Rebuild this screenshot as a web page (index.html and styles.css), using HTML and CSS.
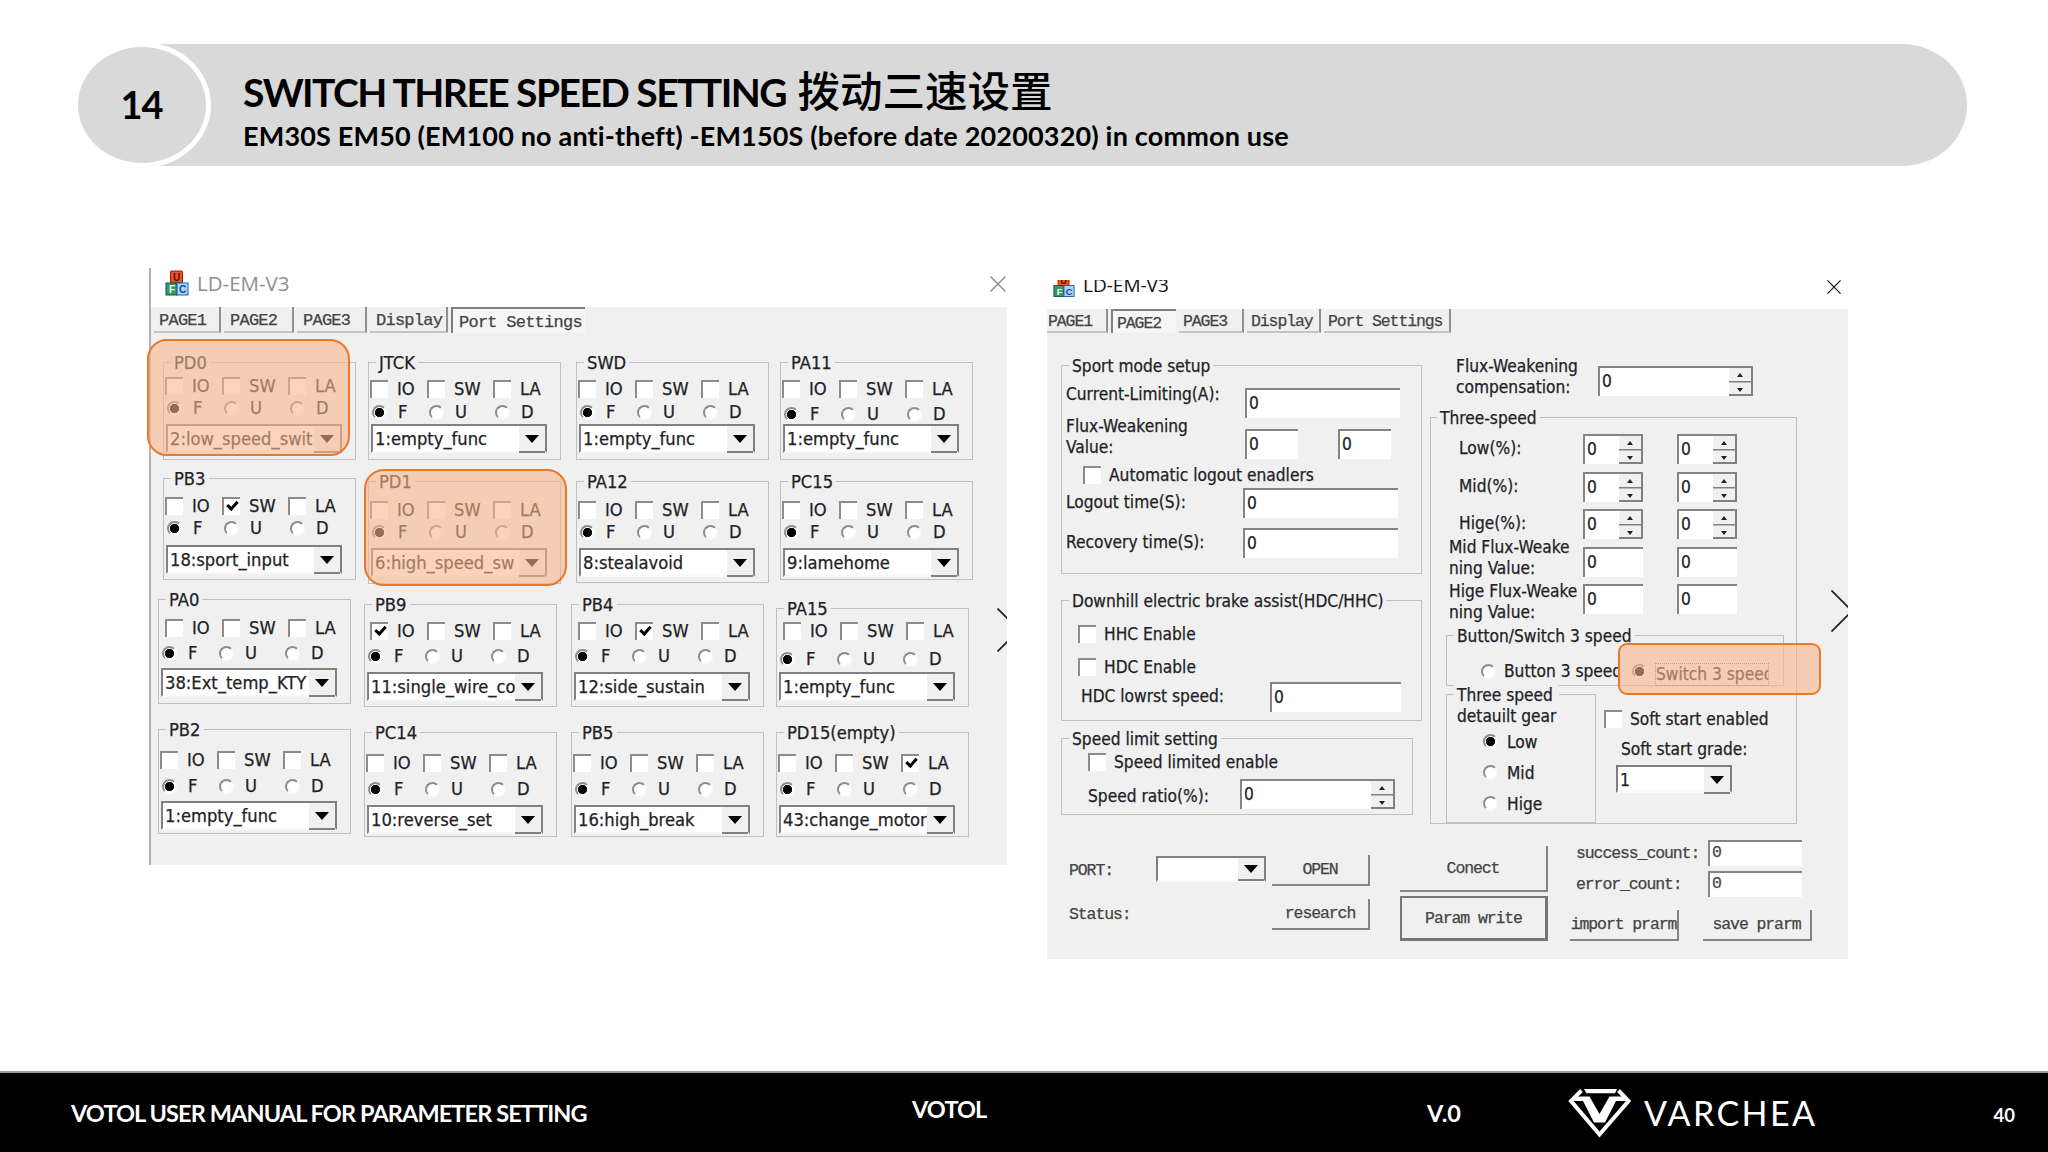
FILE: index.html
```
<!DOCTYPE html>
<html lang="en">
<head>
  <meta charset="UTF-8" />
  <meta name="viewport" content="width=device-width, initial-scale=1.0"/>
  <title>VOTOL User Manual - Switch Three Speed Setting</title>
  <link rel="stylesheet" href="styles.css">
</head>
<body>
  <div class="slide">
    <header class="header">
      <div class="number">14</div>
      <div class="header-bar">
        <h1><span class="title-en">SWITCH THREE SPEED SETTING</span> <span class="title-cn" lang="zh">拨动三速设置</span></h1>
        <p>EM30S EM50 (EM100 no anti-theft) -EM150S (before date 20200320) in common use</p>
      </div>
    </header>

    <main class="screens">
      <!-- Port settings -->
      <section class="window window-ports">
        <div class="titlebar">
          <svg class="app-icon" viewBox="0 0 24 26">
            <rect x="5.5" y="1" width="12" height="12" rx="1" fill="#e8532a" stroke="#8a2408"/>
            <rect x="1" y="13" width="11" height="12" fill="#2f9a63" stroke="#0c5a3a"/>
            <rect x="12" y="13" width="11" height="12" fill="#a9d4f5" stroke="#1c5fa8"/>
            <text x="8" y="11" fill="#5a0c00">U</text>
            <text x="4" y="23" fill="#fff">F</text>
            <text x="14" y="23" fill="#0b4ea0">C</text>
          </svg>
          <span class="title">LD-EM-V3</span>
          <svg class="close" viewBox="0 0 16 16"><path d="M0.5 0.5L15.5 15.5M15.5 0.5L0.5 15.5"/></svg>
        </div>
        <div class="tabs">
          <div class="tab">PAGE1</div>
          <div class="tab">PAGE2</div>
          <div class="tab">PAGE3</div>
          <div class="tab tab-display">Display</div>
          <div class="tab tab-ports active">Port Settings</div>
        </div>
        <div class="ports" id="ports"></div>
        <svg class="chevron" viewBox="0 0 10 44"><path d="M0.5 0.5L22 22L0.5 43.5"/></svg>
        <div class="highlight highlight-low"></div>
        <div class="highlight highlight-high"></div>
      </section>

      <!-- Page 2 -->
      <section class="window window-page2">
        <div class="titlebar">
          <svg class="app-icon" viewBox="0 0 24 26">
            <rect x="5.5" y="1" width="12" height="12" rx="1" fill="#e8532a" stroke="#8a2408"/>
            <rect x="1" y="13" width="11" height="12" fill="#2f9a63" stroke="#0c5a3a"/>
            <rect x="12" y="13" width="11" height="12" fill="#a9d4f5" stroke="#1c5fa8"/>
            <text x="8" y="11" fill="#5a0c00">U</text>
            <text x="4" y="23" fill="#fff">F</text>
            <text x="14" y="23" fill="#0b4ea0">C</text>
          </svg>
          <span class="title">LD-EM-V3</span>
          <svg class="close" viewBox="0 0 16 16"><path d="M0.5 0.5L15.5 15.5M15.5 0.5L0.5 15.5"/></svg>
        </div>
        <div class="tabs">
          <div class="tab">PAGE1</div>
          <div class="tab active">PAGE2</div>
          <div class="tab">PAGE3</div>
          <div class="tab tab-display">Display</div>
          <div class="tab tab-ports">Port Settings</div>
        </div>

        <div class="settings">
          <div class="settings-left">
            <div class="group sport">
              <div class="legend">Sport mode setup</div>
              <div class="row current"><label>Current-Limiting(A):</label><div class="input">0</div></div>
              <div class="row flux"><label>Flux-Weakening<br>Value:</label><div class="input">0</div><div class="input">0</div></div>
              <div class="row auto"><i class="check"></i><span>Automatic logout enadlers</span></div>
              <div class="row logout"><label>Logout time(S):</label><div class="input">0</div></div>
              <div class="row recovery"><label>Recovery time(S):</label><div class="input">0</div></div>
            </div>
            <div class="group downhill">
              <div class="legend">Downhill electric brake assist(HDC/HHC)</div>
              <div class="row hhc"><i class="check"></i><span>HHC Enable</span></div>
              <div class="row hdc"><i class="check"></i><span>HDC Enable</span></div>
              <div class="row lowest"><label>HDC lowrst speed:</label><div class="input">0</div></div>
            </div>
            <div class="group limit">
              <div class="legend">Speed limit setting</div>
              <div class="row limited"><i class="check"></i><span>Speed limited enable</span></div>
              <div class="row ratio"><label>Speed ratio(%):</label><div class="input spin">0<i class="spinner"></i></div></div>
            </div>
          </div>

          <div class="settings-right">
            <div class="row compensation"><label>Flux-Weakening<br>compensation:</label><div class="input spin">0<i class="spinner"></i></div></div>
            <div class="group three">
              <div class="legend">Three-speed</div>
              <div class="row speed low"><label>Low(%):</label><div class="input spin">0<i class="spinner"></i></div><div class="input spin">0<i class="spinner"></i></div></div>
              <div class="row speed mid"><label>Mid(%):</label><div class="input spin">0<i class="spinner"></i></div><div class="input spin">0<i class="spinner"></i></div></div>
              <div class="row speed hige"><label>Hige(%):</label><div class="input spin">0<i class="spinner"></i></div><div class="input spin">0<i class="spinner"></i></div></div>
              <div class="row speed mid-flux"><label>Mid Flux-Weake<br>ning Value:</label><div class="input">0</div><div class="input">0</div></div>
              <div class="row speed hige-flux"><label>Hige Flux-Weake<br>ning Value:</label><div class="input">0</div><div class="input">0</div></div>
              <div class="group mode">
                <div class="legend">Button/Switch 3 speed</div>
                <div class="row">
                  <i class="radio"></i><span class="mode-name">Button 3 speed</span>
                  <i class="radio on"></i><span class="mode-name focus">Switch 3 speed</span>
                </div>
              </div>
              <div class="three-bottom">
                <div class="group gear">
                  <div class="legend">Three speed<br>detauilt gear</div>
                  <div class="row"><i class="radio on"></i><span>Low</span></div>
                  <div class="row"><i class="radio"></i><span>Mid</span></div>
                  <div class="row"><i class="radio"></i><span>Hige</span></div>
                </div>
                <div class="soft">
                  <div class="row"><i class="check"></i><span>Soft start enabled</span></div>
                  <div class="soft-label">Soft start grade:</div>
                  <div class="select"><span>1</span><i class="arrow"></i></div>
                </div>
              </div>
            </div>
          </div>
        </div>

        <div class="actions">
          <div class="action-labels"><div>PORT:</div><div>Status:</div></div>
          <div class="select port-select"><span></span><i class="arrow"></i></div>
          <div class="action-small"><div class="button">OPEN</div><div class="button">research</div></div>
          <div class="action-big"><div class="button">Conect</div><div class="button default">Param write</div></div>
          <div class="counters">
            <div class="counter"><span>success_count:</span><div class="input">0</div></div>
            <div class="counter"><span>error_count:</span><div class="input">0</div></div>
            <div class="files"><div class="button">import prarm</div><div class="button">save prarm</div></div>
          </div>
        </div>
        <svg class="chevron" viewBox="0 0 17 42"><path d="M0.5 0.5L21 21L0.5 41.5"/></svg>
        <div class="highlight highlight-switch"></div>
      </section>
    </main>

    <footer class="footer">
      <div class="manual">VOTOL USER MANUAL FOR PARAMETER SETTING</div>
      <div class="product">VOTOL</div>
      <div class="version">V.0</div>
      <svg class="logo" viewBox="0 0 64 49">
        <path d="M13.5 1.5L3 12L31.5 45.5L60.5 12L50.5 1.5" fill="none" stroke="#fff" stroke-width="4"/>
        <path d="M16 0H49L47 4.300H18.500Z" fill="#fff"/>
        <path d="M9 7.500H21.500L31.500 25L41.500 7.500H54.500L58 12H48L37 33.500H26L15 12H6Z" fill="#fff"/>
      </svg>
      <div class="brand">VARCHEA</div>
      <div class="page">40</div>
    </footer>
  </div>

  <script>
    // per port: name, x shift, top, height, check / radio / select offsets, function, ticked box, check shift
    const columns = [
      [
        ['PD0', 0, 362, 98, 13, 44, 62, '2:low_speed_swit', '', 0],
        ['PB3', 0, 478, 102, 17, 48, 67, '18:sport_input', 'SW', 0],
        ['PA0', -5, 599, 105, 18, 52, 69, '38:Ext_temp_KTY', '', 5],
        ['PB2', -5, 729, 105, 20, 55, 72, '1:empty_func', '', 0]
      ],
      [
        ['JTCK', 0, 362, 98, 16, 48, 62, '1:empty_func', '', 0],
        ['PD1', 0, 481, 103, 18, 49, 67, '6:high_speed_sw', '', 0],
        ['PB9', -4, 604, 103, 16, 50, 68, '11:single_wire_co', 'IO', 4],
        ['PC14', -4, 732, 105, 20, 55, 73, '10:reverse_set', '', 0]
      ],
      [
        ['SWD', 0, 362, 98, 16, 48, 62, '1:empty_func', '', 0],
        ['PA12', 0, 481, 102, 18, 49, 67, '8:stealavoid', '', 0],
        ['PB4', -5, 604, 103, 16, 50, 68, '12:side_sustain', 'SW', 5],
        ['PB5', -5, 732, 105, 20, 55, 73, '16:high_break', '', 0]
      ],
      [
        ['PA11', 0, 362, 98, 16, 50, 62, '1:empty_func', '', 0],
        ['PC15', 0, 481, 99, 18, 49, 67, '9:lamehome', '', 0],
        ['PA15', -4, 608, 99, 12, 49, 64, '1:empty_func', '', 5],
        ['PD15(empty)', -4, 732, 105, 20, 55, 73, '43:change_motor', 'LA', 0]
      ]
    ];

    function renderPort(port, gap) {
      const [name, shift, top, height, check, radio, select, func, ticked, checkShift] = port;
      const checks = ['IO', 'SW', 'LA'].map(n => `<div><i class="check${n === ticked ? ' on' : ''}"></i>${n}</div>`).join('');
      const radios = ['F', 'U', 'D'].map(n => `<div><i class="radio${n === 'F' ? ' on' : ''}"></i>${n}</div>`).join('');
      return `<div class="group port" style="margin-top:${gap}px;margin-left:${shift}px;height:${height}px">
        <div class="legend">${name}</div>
        <div class="checks" style="margin-top:${check - 11}px;margin-left:${checkShift}px">${checks}</div>
        <div class="radios" style="margin-top:${radio - 26 - check}px">${radios}</div>
        <div class="select" style="margin-top:${select - radio - 8}px"><span>${func}</span><i class="arrow"></i></div>
      </div>`;
    }

    document.getElementById('ports').innerHTML = columns.map(ports => {
      let bottom = 333;
      return '<div class="port-column">' + ports.map(port => {
        const gap = port[2] - bottom;
        bottom = port[2] + port[3];
        return renderPort(port, gap);
      }).join('') + '</div>';
    }).join('');
  </script>
</body>
</html>
```

FILE: styles.css
```
* {
  box-sizing: border-box;
}
body {
  margin: 0;
  background: #fff;
  color: #000;
  font-family: Lato, "Open Sans", sans-serif;
}
.slide {
  width: 2048px;
  height: 1152px;
  display: flex;
  flex-direction: column;
  overflow: hidden;
}

/* header */
.header {
  display: flex;
  height: 122px;
  margin: 44px 81px 0 73px;
}
.number {
  width: 138px;
  height: 126px;
  margin-top: -2px;
  padding: 0 1px 2px 0;
  border: 5px solid #fff;
  border-radius: 50%;
  background: #d9d9d9;
  display: flex;
  justify-content: center;
  align-items: center;
  font-size: 38px;
  font-weight: bold;
  letter-spacing: -1px;
  z-index: 1;
}
.header-bar {
  flex: 1;
  margin-left: -69px;
  padding: 18px 0 0 101px;
  background: #d9d9d9;
  border-radius: 0 65px 65px 0 / 0 61px 61px 0;
  white-space: nowrap;
}
.header-bar h1 {
  margin: 0;
  height: 56px;
  line-height: 54px;
  font-size: 39px;
}
.title-en {
  letter-spacing: -1.55px;
}
.title-cn {
  margin-left: 2px;
  font-family: "Noto Sans CJK SC", sans-serif;
  font-weight: 500;
  font-size: 42.5px;
}
.header-bar p {
  margin: 0;
  line-height: 36px;
  font-size: 27px;
  font-weight: bold;
  letter-spacing: 0.17px;
}

/* screens */
.screens {
  flex: 1;
  display: flex;
  align-items: flex-start;
  padding: 102px 0 0 149px;
  font-family: "DejaVu Sans Condensed", "DejaVu Sans", sans-serif;
  font-size: 18.2px;
  line-height: 21px;
  color: #222226;
  -webkit-text-stroke: 0.25px;
}
.window {
  position: relative;
  background: #f0f0f0;
}
.window-ports {
  width: 858px;
  height: 597px;
  border-left: 2px solid #b4b4b8;
}
.window-page2 {
  width: 801px;
  height: 679px;
  margin: 12px 0 0 40px;
  font-size: 17.2px;
}
.titlebar {
  display: flex;
  align-items: center;
  height: 39px;
  padding: 0 0 9px 14px;
  background: #fff;
  overflow: hidden;
}
.app-icon {
  width: 24px;
  height: 26px;
  font: bold 10px "Liberation Sans", sans-serif;
}
.title {
  margin-left: 8px;
  font-family: "Open Sans", sans-serif;
  font-size: 20.5px;
  color: #8e8e92;
  -webkit-text-stroke: 0;
}
.close {
  width: 16px;
  height: 16px;
  margin: 2px 1px 0 auto;
  fill: none;
  stroke: #8a8a8a;
  stroke-width: 1.4;
}
.window-page2 .titlebar {
  height: 29px;
  padding: 0 6px 18px 6px;
}
.window-page2 .app-icon {
  width: 22px;
  height: 25px;
}
.window-page2 .title {
  color: #111;
  font-size: 19px;
}
.window-page2 .close {
  width: 14px;
  height: 14px;
  margin-top: 3px;
  stroke: #111;
}

/* tabs */
.tabs {
  display: flex;
  height: 26px;
  font-family: "Liberation Mono", monospace;
  font-size: 17px;
  letter-spacing: -0.75px;
  line-height: 27px;
  color: #444;
  white-space: nowrap;
}
.tab {
  width: 67px;
  margin-left: 3px;
  padding-left: 5px;
  border-right: 2px solid #909090;
  border-bottom: 2px solid #c4c4c4;
}
.window-ports .tab + .tab {
  width: 70px;
  padding-left: 6px;
}
.window-ports .tabs .tab-display {
  width: 78px;
}
.window-ports .tabs .tab-ports {
  width: 134px;
}
.tab.active {
  border: 0 solid #808080;
  border-width: 2px 0 0 2px;
  background: #f6f6f6;
}
.window-page2 .tabs {
  height: 24px;
  font-size: 16.5px;
  letter-spacing: -1.1px;
  line-height: 25px;
}
.window-page2 .tab {
  width: 65px;
  padding-left: 4px;
}
.window-page2 .tab:first-child {
  width: 61px;
  margin-left: 0;
  padding-left: 1px;
}
.window-page2 .tabs .tab-display {
  width: 74px;
}
.window-page2 .tabs .tab-ports {
  width: 127px;
}

/* controls */
.group {
  border: 1px solid #c0c0c2;
}
.legend {
  width: fit-content;
  margin: -10px 0 0 7px;
  padding: 0 3px;
  line-height: 20px;
  background: #f0f0f0;
  white-space: nowrap;
}
.check {
  position: relative;
  flex: none;
  width: 18px;
  height: 18px;
  background: #fff;
  border: 0 solid #8c8c8c;
  border-width: 2px 0 0 2px;
}
.check.on::after {
  content: "";
  position: absolute;
  left: 3px;
  top: 2px;
  width: 8px;
  height: 4px;
  border: 0 solid #000;
  border-width: 0 0 3px 3px;
  transform: rotate(-48deg);
}
.radio {
  flex: none;
  width: 15px;
  height: 15px;
  border-radius: 50%;
  background: #fff;
  border: 2px solid #fafafa;
  border-top-color: #8c8c8c;
  border-left-color: #8c8c8c;
}
.radio.on {
  background: radial-gradient(circle, #000 4.300px, #fff 5px);
}
.select {
  display: flex;
  width: 176px;
  height: 29px;
  border: 2px solid #808084;
  border-bottom-color: #f8f8f8;
  background: #fff;
}
.select span {
  flex: 1;
  padding-left: 2px;
  line-height: 26px;
  overflow: hidden;
  white-space: nowrap;
}
.arrow {
  display: flex;
  justify-content: center;
  align-items: center;
  width: 26px;
  height: 27px;
  background: #f0f0f0;
  border-bottom: 2px solid #808084;
}
.arrow::after {
  content: "";
  border: 7px solid transparent;
  border-top: 8px solid #000;
  border-bottom: 0;
}
.input {
  display: flex;
  width: 155px;
  height: 30px;
  padding-left: 2px;
  line-height: 26px;
  background: #fff;
  border: 0 solid #848488;
  border-width: 2px 0 0 2px;
}
.spinner {
  position: relative;
  width: 24px;
  margin-left: auto;
  background: linear-gradient(#808080, #808080) 0 13px / 100% 1.5px no-repeat #f0f0f0;
  border-right: 2px solid #808080;
  border-bottom: 2px solid #808080;
}
.spinner::before,
.spinner::after {
  content: "";
  position: absolute;
  left: 8px;
  top: 5px;
  border: 3px solid transparent;
  border-top: 0;
  border-bottom: 4px solid #222;
}
.spinner::after {
  top: 20px;
  border-top: 4px solid #222;
  border-bottom: 0;
}
.spin {
  border-right: 0;
}
.button {
  display: flex;
  justify-content: center;
  align-items: center;
  border: 0 solid #848484;
  border-width: 0 2px 2px 0;
}
.button.default {
  border: 2px solid #767676;
  border-width: 2px 3px 3px 2px;
}
.chevron {
  position: absolute;
  fill: none;
  stroke: #222;
  stroke-width: 1.8;
}
.window-ports .chevron {
  right: 0;
  top: 340px;
  width: 10px;
  height: 44px;
}
.window-page2 .chevron {
  right: 0;
  top: 310px;
  width: 17px;
  height: 42px;
}
.highlight {
  position: absolute;
  background: rgba(249, 182, 142, 0.6);
  border: 2px solid #e87a2c;
}
.highlight-low {
  left: -4px;
  top: 71px;
  width: 203px;
  height: 117px;
  border-radius: 20px;
}
.highlight-high {
  left: 213px;
  top: 201px;
  width: 203px;
  height: 117px;
  border-radius: 20px;
}
.highlight-switch {
  left: 571px;
  top: 363px;
  width: 203px;
  height: 52px;
  border-radius: 9px;
}

/* ports */
.ports {
  display: grid;
  grid-template-columns: 205px 208px 204px 193px;
  padding-left: 12px;
}
.port {
  width: 193px;
}
.checks,
.radios {
  display: grid;
  grid-template-columns: 57px 66px 50px;
  padding-left: 1px;
  height: 18px;
  line-height: 18px;
}
.checks div,
.radios div {
  display: flex;
  align-items: center;
  gap: 9px;
}
.checks div {
  line-height: 22px;
}
.radios {
  height: 16px;
  padding-left: 3px;
}
.radios div {
  gap: 11px;
  line-height: 20px;
}
.port .select {
  margin-left: 2px;
}

/* page 2 */
.settings {
  display: flex;
  padding-left: 14px;
  white-space: nowrap;
}
.settings-left {
  width: 369px;
  padding-top: 32px;
}
.settings-right {
  padding-top: 33px;
}
.row {
  display: flex;
  align-items: center;
  height: 31px;
}
.row label {
  flex: none;
}
.row .check + span {
  margin-left: 8px;
}
.sport {
  width: 361px;
  height: 209px;
}
.sport .row {
  padding-left: 4px;
}
.sport label {
  width: 179px;
}
.current {
  margin-top: 11px;
}
.current label {
  margin-bottom: 16px;
}
.flux {
  margin-top: 10px;
}
.flux label {
  margin-bottom: 14px;
}
.flux .input {
  width: 53px;
}
.flux .input + .input {
  margin-left: 40px;
}
.sport .auto {
  height: 18px;
  margin-top: 7px;
  padding-left: 21px;
}
.logout {
  margin-top: 3px;
}
.recovery {
  margin-top: 9px;
}
.sport .logout label,
.sport .recovery label {
  width: 177px;
}
.downhill {
  width: 361px;
  height: 121px;
  margin-top: 26px;
}
.hhc,
.hdc {
  height: 18px;
  margin-top: 14px;
  padding-left: 16px;
}
.hdc {
  margin-top: 15px;
}
.lowest {
  margin-top: 5px;
  padding-left: 19px;
}
.lowest label {
  width: 189px;
}
.lowest .input {
  width: 131px;
}
.limit {
  width: 352px;
  height: 77px;
  margin-top: 17px;
}
.limited {
  height: 18px;
  margin-top: 4px;
  padding-left: 26px;
}
.ratio {
  margin-top: 7px;
  padding-left: 26px;
}
.ratio label {
  width: 152px;
  margin-top: 5px;
}
.compensation {
  padding-left: 26px;
}
.compensation label {
  width: 142px;
  margin-bottom: 10px;
}
.compensation .input {
  margin-bottom: 2px;
}
.three {
  width: 367px;
  height: 407px;
  margin-top: 20px;
}
.three > .legend {
  margin-left: 6px;
}
.speed {
  margin-top: 6px;
  padding-left: 28px;
}
.speed label {
  width: 124px;
  margin-bottom: 3px;
}
.speed .input {
  width: 60px;
  margin-bottom: 2px;
}
.speed .input + .input {
  margin-left: 34px;
}
.mid,
.mid-flux {
  margin-top: 7px;
}
.mid-flux,
.hige-flux {
  padding-left: 18px;
}
.mid-flux label,
.hige-flux label {
  width: 134px;
}
.mid-flux label {
  margin-bottom: 9px;
}
.hige-flux label {
  margin: 5px 0 0;
}
.mode {
  width: 338px;
  height: 51px;
  margin: 20px 0 0 15px;
}
.mode .row {
  height: 22px;
  margin-top: 14px;
  padding-left: 34px;
}
.mode-name {
  width: 116px;
  margin: 0 12px 0 8px;
  overflow: hidden;
}
.mode-name.focus {
  width: 114px;
  margin: 6px 0 0 8px;
  border: 1px dotted #777;
}
.three-bottom {
  display: flex;
  margin: 8px 0 0 15px;
}
.gear {
  width: 150px;
  height: 129px;
}
.gear .legend {
  line-height: 21px;
}
.gear .row {
  height: 22px;
  margin-top: 9px;
  padding-left: 36px;
}
.gear .legend + .row {
  margin-top: 3px;
}
.gear .row span {
  margin: 2px 0 0 9px;
}
.soft {
  padding: 16px 0 0 8px;
}
.soft .row {
  height: 18px;
}
.soft-label {
  margin: 11px 0 0 17px;
}
.soft .select {
  width: 116px;
  height: 28px;
  margin: 5px 0 0 12px;
}

/* bottom buttons */
.actions {
  display: flex;
  align-items: flex-start;
  padding: 16px 0 0 22px;
  font-family: "Liberation Mono", monospace;
  font-size: 16.5px;
  letter-spacing: -1.1px;
  color: #444;
  white-space: nowrap;
}
.action-labels {
  width: 87px;
  padding-top: 20px;
}
.action-labels div + div {
  margin-top: 23px;
}
.port-select {
  width: 110px;
  height: 26px;
  margin-top: 16px;
}
.port-select .arrow {
  height: 23px;
}
.action-small {
  width: 98px;
  margin: 15px 0 0 6px;
}
.action-small .button {
  height: 31px;
}
.action-small .button + .button {
  margin-top: 13px;
}
.action-big {
  width: 148px;
  margin: 6px 0 0 30px;
}
.action-big .button {
  height: 46px;
}
.action-big .button + .button {
  height: 45px;
  margin-top: 4px;
}
.counters {
  width: 242px;
  margin-left: 22px;
}
.counter {
  display: flex;
  align-items: center;
  height: 26px;
  padding-left: 6px;
}
.counter span {
  width: 132px;
}
.counter + .counter {
  margin-top: 5px;
}
.counter .input {
  width: 94px;
  height: 26px;
  line-height: 22px;
}
.files {
  display: flex;
  justify-content: space-between;
  margin-top: 13px;
}
.files .button {
  width: 109px;
  height: 31px;
}

/* footer */
.footer {
  display: flex;
  height: 81px;
  border-top: 2px solid #9a9c9c;
  background: #000;
  color: #fff;
  font-size: 23.5px;
  font-weight: bold;
  letter-spacing: -0.9px;
  line-height: 30px;
  white-space: nowrap;
}
.manual {
  width: 841px;
  padding: 25px 0 0 71px;
}
.product {
  width: 515px;
  padding: 21px 0 0 71px;
}
.version {
  width: 212px;
  padding: 25px 0 0 71px;
  letter-spacing: 0;
}
.logo {
  width: 64px;
  height: 49px;
  margin-top: 16px;
}
.brand {
  width: 300px;
  padding: 25px 0 0 12px;
  font-size: 34px;
  font-weight: normal;
  letter-spacing: 2.4px;
}
.page {
  margin: 27px 33px 0 auto;
  font-size: 18.5px;
  letter-spacing: 0;
}
```
